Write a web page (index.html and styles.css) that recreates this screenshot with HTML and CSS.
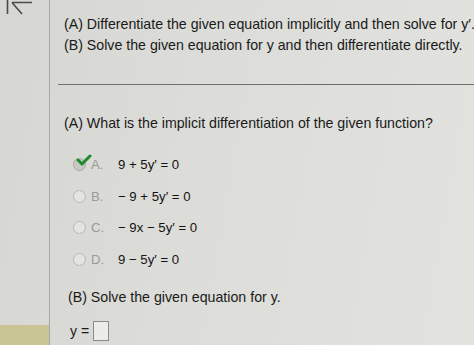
FILE: index.html
```html
<!DOCTYPE html>
<html>
<head>
<meta charset="utf-8">
<link rel="stylesheet" href="styles.css">
</head>
<body>
<div class="page">
  <aside class="side">
    <svg class="back" width="34" height="16" viewBox="0 0 34 16">
      <path d="M7.5 0 V14 M12 2.5 H32 M12 2.5 L22 14" fill="none" stroke="#4a4a4a" stroke-width="1.6"/>
    </svg>
    <div class="tab"></div>
  </aside>
  <main class="main">
    <div class="intro">
      <p>(A) Differentiate the given equation implicitly and then solve for y′.</p>
      <p>(B) Solve the given equation for y and then differentiate directly.</p>
    </div>
    <hr class="rule">
    <p class="q">(A) What is the implicit differentiation of the given function?</p>
    <ul class="opts">
      <li class="opt">
        <span class="radio sel">
          <svg class="check" width="16" height="12" viewBox="0 0 16 12"><path d="M2 6 L6 10 L14 2" fill="none" stroke="#1f8a2a" stroke-width="3" stroke-linecap="round" stroke-linejoin="round"/></svg>
        </span>
        <span class="lbl">A.</span><span class="eq">9 + 5y′ = 0</span>
      </li>
      <li class="opt"><span class="radio"></span><span class="lbl">B.</span><span class="eq">− 9 + 5y′ = 0</span></li>
      <li class="opt"><span class="radio"></span><span class="lbl">C.</span><span class="eq">− 9x − 5y′ = 0</span></li>
      <li class="opt"><span class="radio"></span><span class="lbl">D.</span><span class="eq">9 − 5y′ = 0</span></li>
    </ul>
    <p class="q2">(B) Solve the given equation for y.</p>
    <div class="ans">y = <span class="box"></span></div>
  </main>
</div>
</body>
</html>
```

FILE: styles.css
```css
html, body {
  margin: 0;
  padding: 0;
}
body {
  width: 474px;
  height: 345px;
  overflow: hidden;
  background: linear-gradient(100deg, #d6d6d2 0%, #dcdcd8 40%, #e2e2de 100%);
  font-family: "Liberation Sans", Arial, sans-serif;
  color: #1a1a1a;
}
.page {
  display: flex;
  height: 345px;
}
.side {
  width: 49px;
  flex: none;
  border-right: 1px solid #a8a8a4;
  display: flex;
  flex-direction: column;
  justify-content: space-between;
}
.back {
  display: block;
}
.tab {
  height: 20px;
  background: #c9c592;
}
.main {
  flex: 1;
  padding-left: 14px;
  min-width: 0;
}
.intro {
  padding-top: 14px;
  font-size: 14.2px;
  line-height: 21px;
}
.intro p {
  margin: 0;
  white-space: nowrap;
}
.rule {
  margin: 28px 0 0 -6px;
  border: 0;
  border-top: 1.5px solid #6f6f6c;
  height: 0;
}
.q {
  margin: 28px 0 0;
  font-size: 14.2px;
  line-height: 20px;
  white-space: nowrap;
}
.opts {
  list-style: none;
  margin: 16px 0 0;
  padding: 0 0 0 9px;
}
.opt {
  display: flex;
  align-items: center;
  height: 31.6px;
  font-size: 13.2px;
}
.radio {
  position: relative;
  width: 11px;
  height: 11px;
  border: 1.5px solid #b8b8b4;
  border-radius: 50%;
  background: #e4e4e0;
  flex: none;
}
.radio.sel {
  background: #c8c8c4;
  border-color: #a8a8a4;
}
.check {
  position: absolute;
  left: 2px;
  top: -5px;
}
.lbl {
  color: #9a9a98;
  margin-left: 5px;
  width: 27px;
}
.eq {
  color: #141414;
}
.q2 {
  margin: 12px 0 0 4px;
  font-size: 14.2px;
  line-height: 20px;
}
.ans {
  margin: 14px 0 0 6px;
  display: flex;
  align-items: center;
  font-size: 14px;
}
.box {
  display: inline-block;
  width: 14px;
  height: 18px;
  border: 1.5px solid #8a8a88;
  background: #ececea;
  margin-left: 4px;
}
```
